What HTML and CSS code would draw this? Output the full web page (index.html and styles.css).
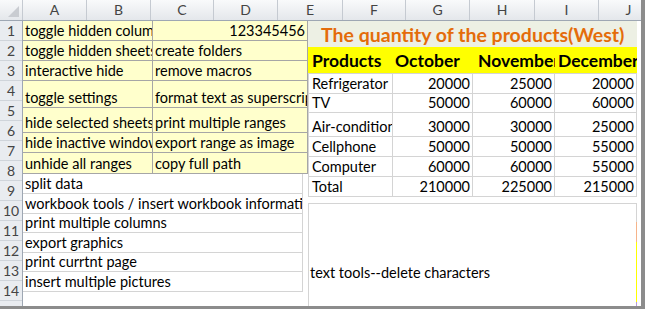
FILE: index.html
```html
<!DOCTYPE html>
<html>
<head>
<meta charset="utf-8">
<link rel="stylesheet" href="styles.css">
</head>
<body>
<div class="sheet">
  <div class="colheads">
    <div class="corner"><span class="tri"></span></div>
    <div class="ch w64">A</div>
    <div class="ch w64">B</div>
    <div class="ch w63">C</div>
    <div class="ch w64">D</div>
    <div class="ch w65">E</div>
    <div class="ch w63">F</div>
    <div class="ch w64">G</div>
    <div class="ch w65">H</div>
    <div class="ch w64">I</div>
    <div class="ch wrest">J</div>
  </div>
  <div class="body">
    <div class="rowheads">
      <div class="rh">1</div><div class="rh">2</div><div class="rh">3</div><div class="rh">4</div><div class="rh">5</div>
      <div class="rh">6</div><div class="rh">7</div><div class="rh">8</div><div class="rh">9</div><div class="rh">10</div>
      <div class="rh">11</div><div class="rh">12</div><div class="rh">13</div><div class="rh">14</div><div class="rh">15</div>
    </div>
    <div class="cells">
      <div class="left">
        <div class="yblock">
          <div class="yrow h20"><div class="c ab">toggle hidden columns</div><div class="c cd num">123345456</div></div>
          <div class="yrow h20"><div class="c ab">toggle hidden sheets</div><div class="c cd">create folders</div></div>
          <div class="yrow h20"><div class="c ab">interactive hide</div><div class="c cd">remove macros</div></div>
          <div class="yrow h27"><div class="c ab">toggle settings</div><div class="c cd">format text as superscript</div></div>
          <div class="yrow h25"><div class="c ab">hide selected sheets</div><div class="c cd">print multiple ranges</div></div>
          <div class="yrow h20"><div class="c ab">hide inactive windows</div><div class="c cd">export range as image</div></div>
          <div class="yrow h21"><div class="c ab">unhide all ranges</div><div class="c cd">copy full path</div></div>
        </div>
        <div class="wblock">
          <div class="wrow h20">split data</div>
          <div class="wrow h20">workbook tools / insert workbook information</div>
          <div class="wrow h19">print multiple columns</div>
          <div class="wrow h20">export graphics</div>
          <div class="wrow h19">print currtnt page</div>
          <div class="wrow h20">insert multiple pictures</div>
        </div>
      </div>
      <div class="pic">
        <div class="title">The quantity of the products(West)</div>
        <div class="thead">
          <div class="tc p1">Products</div>
          <div class="tc p2">October</div>
          <div class="tc p3">November</div>
          <div class="tc p4">December</div>
        </div>
        <div class="trow h20"><div class="td p1">Refrigerator</div><div class="td p2 n">20000</div><div class="td p3 n">25000</div><div class="td p4 n">20000</div></div>
        <div class="trow h19"><div class="td p1">TV</div><div class="td p2 n">50000</div><div class="td p3 n">60000</div><div class="td p4 n">60000</div></div>
        <div class="trow h24"><div class="td p1">Air-conditioner</div><div class="td p2 n">30000</div><div class="td p3 n">30000</div><div class="td p4 n">25000</div></div>
        <div class="trow h20"><div class="td p1">Cellphone</div><div class="td p2 n">50000</div><div class="td p3 n">50000</div><div class="td p4 n">55000</div></div>
        <div class="trow h20"><div class="td p1">Computer</div><div class="td p2 n">60000</div><div class="td p3 n">60000</div><div class="td p4 n">55000</div></div>
        <div class="trow h20"><div class="td p1">Total</div><div class="td p2 n">210000</div><div class="td p3 n">225000</div><div class="td p4 n">215000</div></div>
        <div class="textbox"><span class="tbtext">text tools--delete characters</span></div>
      </div>
    </div>
  </div>
</div>
</body>
</html>
```

FILE: styles.css
```css
html, body {
  margin: 0;
  padding: 0;
  background: #ffffff;
}

.sheet {
  width: 641px;
  height: 306px;
  overflow: hidden;
  border-right: 4px solid #8c8c8c;
  border-bottom: 3px solid #8c8c8c;
  font-family: Lato, "Open Sans", sans-serif;
  font-size: 14.5px;
  color: #000;
  background: #fff;
}

.colheads {
  display: flex;
  height: 20px;
  border-bottom: 1px solid #9ea7b3;
  background: linear-gradient(#f9fafb, #e4e7eb);
  color: #444;
  font-size: 14px;
  white-space: nowrap;
}

.corner {
  width: 22px;
  flex: none;
  border-right: 1px solid #c5cad1;
  position: relative;
}

.tri {
  position: absolute;
  right: 3px;
  bottom: 3px;
  width: 0;
  height: 0;
  border-left: 11px solid transparent;
  border-bottom: 11px solid #c9ccd1;
}

.ch {
  flex: none;
  box-sizing: border-box;
  border-right: 1px solid #c5cad1;
  display: flex;
  align-items: center;
  justify-content: center;
  line-height: 20px;
}

.w63 { width: 63px; }
.w64 { width: 64px; }
.w65 { width: 65px; }
.wrest { width: 60px; }

.body {
  display: flex;
}

.rowheads {
  width: 22px;
  flex: none;
  border-right: 1px solid #9ea7b3;
  background: #e9ecf0;
  color: #444;
  font-size: 14px;
}

.rh {
  height: 19px;
  border-bottom: 1px solid #cfd4da;
  display: flex;
  align-items: center;
  justify-content: center;
  line-height: 19px;
}

.cells {
  display: flex;
  align-items: flex-start;
}

.left {
  width: 285px;
  flex: none;
}

.yblock {
  background: #ffffcc;
  border-right: 1px solid #a6a6a6;
}

.yrow {
  display: flex;
  box-sizing: border-box;
  border-bottom: 1px solid #a6a6a6;
}

.h19 { height: 19px; }
.h20 { height: 20px; }
.h21 { height: 21px; }
.h24 { height: 24px; }
.h25 { height: 25px; }
.h27 { height: 27px; }

.c {
  overflow: hidden;
  white-space: nowrap;
  box-sizing: border-box;
  display: flex;
  align-items: flex-end;
  padding: 0 0 1px 2px;
}

.ab {
  width: 130px;
  border-right: 1px solid #a6a6a6;
}

.cd {
  width: 154px;
}

.num {
  justify-content: flex-end;
  padding-right: 2px;
}

.wblock {
  width: 280px;
}

.wrow {
  box-sizing: border-box;
  border-bottom: 1px solid #d4d4d4;
  border-right: 1px solid #d4d4d4;
  overflow: hidden;
  white-space: nowrap;
  display: flex;
  align-items: flex-end;
  padding: 0 0 1px 2px;
}

.pic {
  width: 329px;
  flex: none;
}

.title {
  height: 26px;
  background: #edf0e4;
  color: #e46c0a;
  font-weight: bold;
  font-size: 19.5px;
  white-space: nowrap;
  overflow: hidden;
  padding-left: 13px;
  line-height: 28px;
}

.thead {
  display: flex;
  height: 26px;
  background: #ffff00;
  font-weight: bold;
  font-size: 17.5px;
  white-space: nowrap;
  border-bottom: 1px solid #d4d4d4;
}

.tc {
  overflow: hidden;
  box-sizing: border-box;
  display: flex;
  align-items: center;
  padding-left: 4px;
}

.p1 { width: 84px; }
.p2 { width: 80px; }
.p3 { width: 82px; }
.p4 { width: 82px; }

.thead .p1 { width: 85px; }
.thead .p2 { padding-left: 2px; }
.thead .p3 { padding-left: 5px; }
.thead .p4 { padding-left: 3px; }

.trow {
  display: flex;
  box-sizing: border-box;
  border-left: 1px solid #d4d4d4;
  border-bottom: 1px solid #d4d4d4;
}

.td {
  box-sizing: border-box;
  border-right: 1px solid #d4d4d4;
  overflow: hidden;
  white-space: nowrap;
  display: flex;
  align-items: flex-end;
  padding: 0 2px 1px 3px;
}

.td.n {
  justify-content: flex-end;
}

.textbox {
  margin-top: 6px;
  height: 120px;
  box-sizing: border-box;
  border: 1px solid #d4d4d4;
  position: relative;
  padding: 60px 0 0 1px;
  white-space: nowrap;
}

.textbox::after {
  content: "";
  position: absolute;
  right: -1px;
  top: 18px;
  width: 1px;
  height: 100px;
  background: linear-gradient(#f6b48a 0, #f6b48a 20px, #ffff00 20px, #ffff00 80px, #b89ad8 80px);
}
```
